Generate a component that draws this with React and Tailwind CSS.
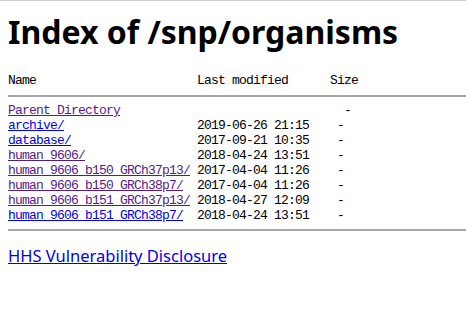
import React from 'react';

const rows = [
  { name: 'archive/', date: '2019-06-26 21:15', visited: false },
  { name: 'database/', date: '2017-09-21 10:35', visited: false },
  { name: 'human_9606/', date: '2018-04-24 13:51', visited: true },
  { name: 'human_9606_b150_GRCh37p13/', date: '2017-04-04 11:26', visited: true },
  { name: 'human_9606_b150_GRCh38p7/', date: '2017-04-04 11:26', visited: true },
  { name: 'human_9606_b151_GRCh37p13/', date: '2018-04-27 12:09', visited: true },
  { name: 'human_9606_b151_GRCh38p7/', date: '2018-04-24 13:51', visited: false },
];

const pad = (s, n) => ' '.repeat(Math.max(0, n - s.length));

const mono = { fontFamily: '"Liberation Mono", monospace' };

export default function App() {
  return (
    <div className="min-h-[309px] w-[466px] bg-white text-black overflow-hidden">
      <div className="h-px bg-[#cfcfcf]" />
      <h1 className="ml-2 mt-[11px] text-[32px] leading-[40px] font-bold font-['Noto_Sans',sans-serif]">
        Index of /snp/organisms
      </h1>

      <pre className="ml-2 mt-[21px] text-[13px] leading-[15px] tracking-[-0.8px] whitespace-pre" style={mono}>
        {'Name' + pad('Name', 27) + 'Last modified' + '      ' + 'Size'}
      </pre>
      <div className="ml-2 mt-[7px] h-[2px] bg-[#a8a8a8]" />

      <pre className="ml-2 mt-[6px] text-[13px] leading-[15px] tracking-[-0.8px] whitespace-pre" style={mono}>
        <div>
          <a href="#" className="underline text-[#551a8b]">Parent Directory</a>
          {pad('Parent Directory', 48) + '-'}
        </div>
        {rows.map((r) => (
          <div key={r.name}>
            <a href="#" className={r.visited ? 'underline text-[#551a8b]' : 'underline text-[#0000ee]'}>
              {r.name}
            </a>
            {pad(r.name, 27) + r.date + '    -'}
          </div>
        ))}
      </pre>
      <div className="ml-2 mt-[6px] h-[2px] bg-[#a8a8a8]" />

      <div className="ml-2 mt-[13px] text-[16.5px] leading-[24px] font-['Noto_Sans',sans-serif]">
        <a href="#" className="underline text-[#0000ee]">HHS Vulnerability Disclosure</a>
      </div>
    </div>
  );
}
